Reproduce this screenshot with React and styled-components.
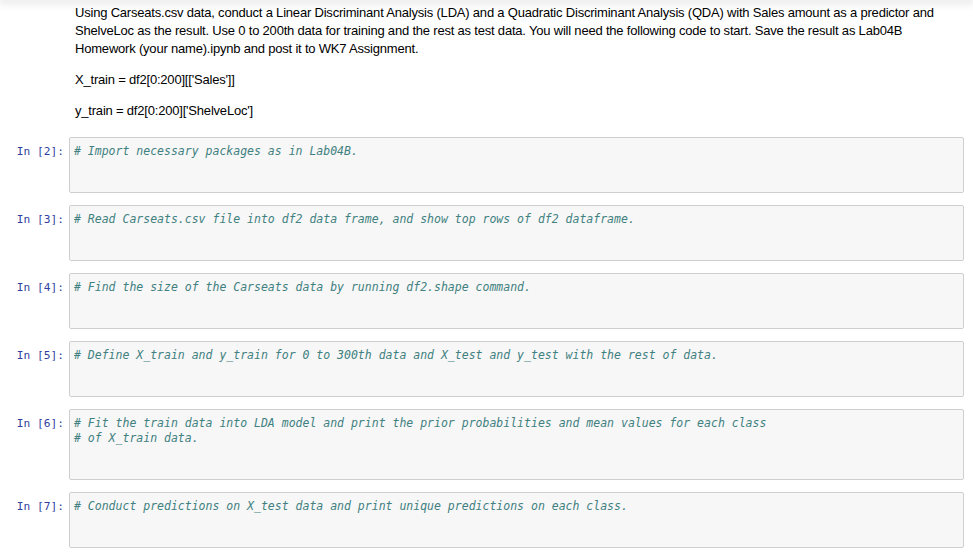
import React from "react";
import styled, { createGlobalStyle } from "styled-components";

const GlobalStyle = createGlobalStyle`
  html, body {
    margin: 0;
    padding: 0;
    background: #ffffff;
  }
  body {
    font-family: "Liberation Sans", Arial, sans-serif;
    color: #000;
  }
`;

const Page = styled.div`
  width: 973px;
  height: 552px;
  overflow: hidden;
  position: relative;
  background: #fff;
`;

const HeaderShadow = styled.div`
  height: 0;
  box-shadow: 0 0 8px 2px rgba(87, 87, 87, 0.25);
`;

const Notebook = styled.div`
  padding: 4px 9px 0 0;
`;

const Markdown = styled.div`
  padding-left: 75px;
  padding-right: 10px;
  font-size: 13px;
  letter-spacing: -0.2px;
  line-height: 18px;
  color: #000;
`;

const Para = styled.p`
  margin: 0 0 13px 0;
  &:last-child {
    margin-bottom: 0;
  }
`;

const Cells = styled.div`
  display: flex;
  flex-direction: column;
  gap: 12px;
  margin-top: 17px;
`;

const CellRow = styled.div`
  display: flex;
  align-items: flex-start;
`;

const Prompt = styled.div`
  width: 64px;
  flex: none;
  padding-right: 5px;
  padding-top: 7px;
  text-align: right;
  font-family: "DejaVu Sans Mono", "Liberation Mono", monospace;
  font-size: 11.2px;
  line-height: 15px;
  color: #303f9f;
  white-space: pre;
`;

const InputBox = styled.div`
  flex: 1;
  background: #f7f7f7;
  border: 1px solid #cfcfcf;
  border-radius: 2px;
  padding: 6px 5px 33px 4px;
`;

const Comment = styled.div`
  font-family: "DejaVu Sans Mono", "Liberation Mono", monospace;
  font-style: italic;
  font-size: 11.5px;
  line-height: 15px;
  color: #408080;
  white-space: pre;
`;

const cells = [
  { n: 2, lines: ["# Import necessary packages as in Lab04B."] },
  {
    n: 3,
    lines: [
      "# Read Carseats.csv file into df2 data frame, and show top rows of df2 dataframe.",
    ],
  },
  {
    n: 4,
    lines: ["# Find the size of the Carseats data by running df2.shape command."],
  },
  {
    n: 5,
    lines: [
      "# Define X_train and y_train for 0 to 300th data and X_test and y_test with the rest of data.",
    ],
  },
  {
    n: 6,
    lines: [
      "# Fit the train data into LDA model and print the prior probabilities and mean values for each class",
      "# of X_train data.",
    ],
  },
  {
    n: 7,
    lines: ["# Conduct predictions on X_test data and print unique predictions on each class."],
  },
];

export default function App() {
  return (
    <Page>
      <GlobalStyle />
      <HeaderShadow />
      <Notebook>
        <Markdown>
          <Para>
            Using Carseats.csv data, conduct a Linear Discriminant Analysis (LDA) and a
            Quadratic Discriminant Analysis (QDA) with Sales amount as a predictor and
            ShelveLoc as the result. Use 0 to 200th data for training and the rest as test
            data. You will need the following code to start. Save the result as Lab04B
            Homework (your name).ipynb and post it to WK7 Assignment.
          </Para>
          <Para>X_train = df2[0:200][['Sales']]</Para>
          <Para>y_train = df2[0:200]['ShelveLoc']</Para>
        </Markdown>
        <Cells>
          {cells.map((c) => (
            <CellRow key={c.n}>
              <Prompt>{`In [${c.n}]:`}</Prompt>
              <InputBox>
                {c.lines.map((l, i) => (
                  <Comment key={i}>{l}</Comment>
                ))}
              </InputBox>
            </CellRow>
          ))}
        </Cells>
      </Notebook>
    </Page>
  );
}
